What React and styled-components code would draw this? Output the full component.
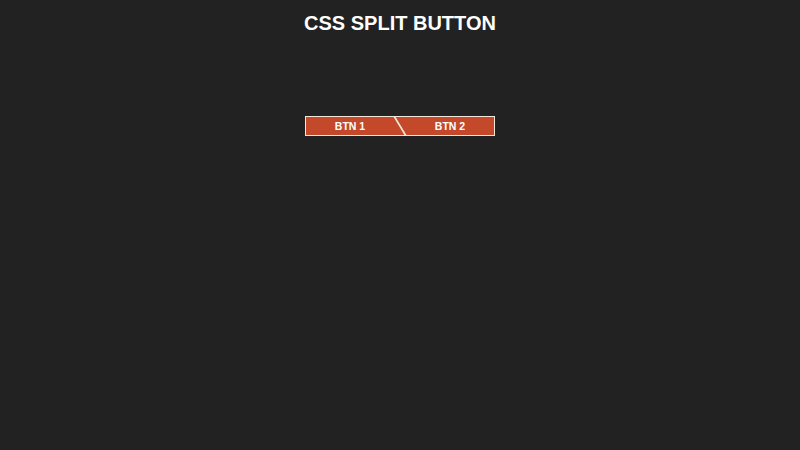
import styled, { createGlobalStyle } from "styled-components";

const GlobalStyle = createGlobalStyle`
  html, body {
    margin: 0;
    padding: 0;
    background-color: #222222;
    font-family: "Liberation Sans", Arial, sans-serif;
  }
`;

const Page = styled.main`
  min-height: 450px;
  display: flex;
  flex-direction: column;
  align-items: center;
  padding-top: 12px;
`;

const Title = styled.h1`
  margin: 0;
  font-size: 20px;
  line-height: 23px;
  font-weight: bold;
  color: #ffffff;
`;

const SplitButton = styled.div`
  display: flex;
  margin-top: 81px;
  border: 1px solid #f4e8dc;
  background-color: #c4492a;
  overflow: hidden;
`;

const Button = styled.button`
  position: relative;
  box-sizing: border-box;
  width: 94px;
  height: 18px;
  padding: ${({ $divider }) => ($divider ? "0 0 0 6px" : "0 6px 0 0")};
  border: none;
  background: transparent;
  color: #ffffff;
  font-family: "Liberation Sans", Arial, sans-serif;
  font-size: 10.5px;
  font-weight: bold;
  cursor: pointer;

  &:hover {
    background-color: #d4552f;
  }

  ${({ $divider }) =>
    $divider &&
    `
    &::before {
      content: "";
      position: absolute;
      top: -2px;
      bottom: -2px;
      left: -1px;
      width: 1.6px;
      background-color: #f4e8dc;
      transform: skewX(31deg);
    }
  `}
`;

export default function App() {
  return (
    <>
      <GlobalStyle />
      <Page>
        <Title>CSS SPLIT BUTTON</Title>
        <SplitButton>
          <Button>BTN 1</Button>
          <Button $divider>BTN 2</Button>
        </SplitButton>
      </Page>
    </>
  );
}
